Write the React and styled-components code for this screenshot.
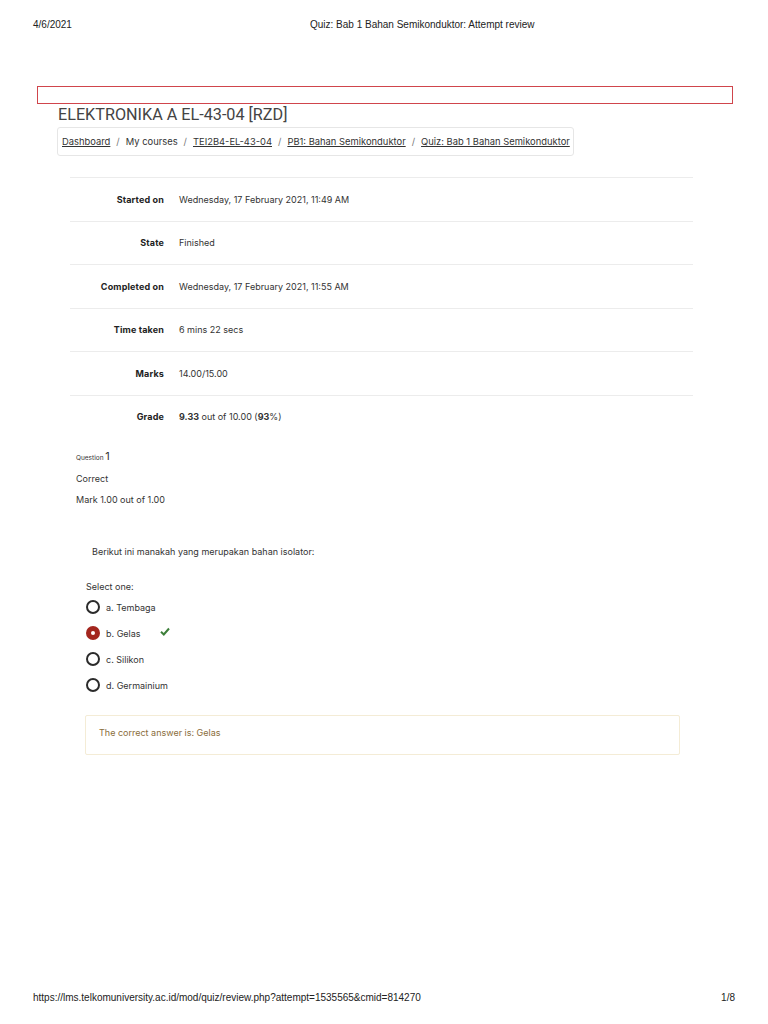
import React from "react";
import styled, { createGlobalStyle } from "styled-components";

const Global = createGlobalStyle`
  html, body { margin: 0; padding: 0; background: #fff; }
  body { font-family: Inter, "Noto Sans", sans-serif; color: #333; }
  * { box-sizing: border-box; }
`;

const Page = styled.div`
  width: 768px;
  min-height: 1024px;
  display: flex;
  flex-direction: column;
`;

const PrintBar = styled.div`
  display: flex;
  align-items: center;
  height: 12px;
  padding: 0 33px;
  font-family: "Liberation Sans", Arial, sans-serif;
  font-size: 10px;
  line-height: 12px;
  color: #222;
  margin-top: ${(p) => p.$top || 0}px;
  margin-bottom: ${(p) => p.$bottom || 0}px;
`;

const PrintCenter = styled.span`
  margin-left: ${(p) => p.$offset}px;
`;

const PrintRight = styled.span`
  margin-left: auto;
`;

const Content = styled.main`
  padding: 0 35px 0 37px;
  display: flex;
  flex-direction: column;
`;

const AlertBox = styled.div`
  margin-top: 55px;
  height: 18px;
  border: 1px solid #d0454c;
`;

const CourseTitle = styled.h1`
  margin: 0 0 0 21px;
  font-family: Roboto, Inter, sans-serif;
  font-size: 16.2px;
  line-height: 22px;
  font-weight: 400;
  color: #444;
`;

const Crumbs = styled.nav`
  margin: 1px 0 0 20px;
  align-self: flex-start;
  height: 29px;
  padding: 0 3px 0 4px;
  border: 1px solid #e6e6e6;
  border-radius: 3px;
  display: flex;
  align-items: center;
  font-size: 9.4px;
  color: #333;
`;

const Crumb = styled.span`
  text-decoration: ${(p) => (p.$link ? "underline" : "none")};
`;

const Sep = styled.span`
  margin: 0 6px;
  color: #777;
`;

const SummaryTable = styled.div`
  margin: 21px 0 0 33px;
  width: 623px;
  display: flex;
  flex-direction: column;
`;

const Row = styled.div`
  height: 43.5px;
  border-top: 1px solid #ececec;
  display: grid;
  grid-template-columns: 94px 1fr;
  column-gap: 15px;
  align-items: center;
  font-size: 9px;
`;

const Label = styled.div`
  text-align: right;
  font-weight: 700;
  color: #222;
  letter-spacing: 0.15px;
`;

const Value = styled.div`
  color: #333;
`;

const Strong = styled.b`
  font-weight: 700;
`;

const QInfo = styled.section`
  margin: 11px 0 0 39px;
  display: flex;
  flex-direction: column;
  gap: 6px;
  font-size: 9px;
  color: #333;
`;

const QNo = styled.div`
  font-size: 6.5px;
  line-height: 14px;
  & > span {
    font-size: 11px;
  }
`;

const QLine = styled.div`
  line-height: 15px;
`;

const QText = styled.p`
  margin: 38px 0 0 55px;
  font-size: 9px;
  line-height: 14px;
`;

const Answers = styled.div`
  margin: 21px 0 0 49px;
  display: flex;
  flex-direction: column;
  font-size: 9px;
`;

const Prompt = styled.div`
  line-height: 14px;
`;

const Option = styled.div`
  display: flex;
  align-items: center;
  height: 26px;
  gap: 6px;
`;

const Radio = styled.span`
  width: 14px;
  height: 14px;
  border-radius: 50%;
  border: ${(p) => (p.$checked ? "none" : "2px solid #2b2b2b")};
  background: ${(p) => (p.$checked ? "#a3261e" : "#fff")};
  display: flex;
  align-items: center;
  justify-content: center;
  &::after {
    content: "";
    display: ${(p) => (p.$checked ? "block" : "none")};
    width: 4px;
    height: 4px;
    border-radius: 50%;
    background: #fff;
  }
`;

const OptText = styled.span`
  color: #333;
`;

const Check = styled.svg`
  margin-left: 13px;
  margin-top: -3px;
`;

const Feedback = styled.div`
  margin: 17px 0 0 48px;
  width: 595px;
  height: 40px;
  border: 1px solid #f4ecd6;
  border-radius: 2px;
  padding: 0 13px 6px;
  display: flex;
  align-items: center;
  font-size: 9px;
  color: #8a6d3b;
`;

const Spacer = styled.div`
  flex: 1;
`;

const rows = [
  ["Started on", "Wednesday, 17 February 2021, 11:49 AM"],
  ["State", "Finished"],
  ["Completed on", "Wednesday, 17 February 2021, 11:55 AM"],
  ["Time taken", "6 mins 22 secs"],
  ["Marks", "14.00/15.00"],
];

const options = [
  { t: "a. Tembaga" },
  { t: "b. Gelas", checked: true },
  { t: "c. Silikon" },
  { t: "d. Germainium" },
];

export default function App() {
  return (
    <>
      <Global />
      <Page>
        <PrintBar $top={19}>
          <span>4/6/2021</span>
          <PrintCenter $offset={238}>Quiz: Bab 1 Bahan Semikonduktor: Attempt review</PrintCenter>
        </PrintBar>
        <Content>
          <AlertBox />
          <CourseTitle>ELEKTRONIKA A EL-43-04 [RZD]</CourseTitle>
          <Crumbs>
            <Crumb $link>Dashboard</Crumb>
            <Sep>/</Sep>
            <Crumb>My courses</Crumb>
            <Sep>/</Sep>
            <Crumb $link>TEI2B4-EL-43-04</Crumb>
            <Sep>/</Sep>
            <Crumb $link>PB1: Bahan Semikonduktor</Crumb>
            <Sep>/</Sep>
            <Crumb $link>Quiz: Bab 1 Bahan Semikonduktor</Crumb>
          </Crumbs>
          <SummaryTable>
            {rows.map(([l, v]) => (
              <Row key={l}>
                <Label>{l}</Label>
                <Value>{v}</Value>
              </Row>
            ))}
            <Row>
              <Label>Grade</Label>
              <Value>
                <Strong>9.33</Strong> out of 10.00 (<Strong>93</Strong>%)
              </Value>
            </Row>
          </SummaryTable>
          <QInfo>
            <QNo>
              Question <span>1</span>
            </QNo>
            <QLine>Correct</QLine>
            <QLine>Mark 1.00 out of 1.00</QLine>
          </QInfo>
          <QText>Berikut ini manakah yang merupakan bahan isolator:</QText>
          <Answers>
            <Prompt>Select one:</Prompt>
            {options.map((o) => (
              <Option key={o.t}>
                <Radio $checked={o.checked} />
                <OptText>{o.t}</OptText>
                {o.checked && (
                  <Check width="10" height="9" viewBox="0 0 10 9">
                    <path d="M1 4.8 L3.8 7.5 L9 1.5" fill="none" stroke="#3d7f3a" strokeWidth="2" />
                  </Check>
                )}
              </Option>
            ))}
          </Answers>
          <Feedback>The correct answer is: Gelas</Feedback>
        </Content>
        <Spacer />
        <PrintBar $bottom={20}>
          <span>https://lms.telkomuniversity.ac.id/mod/quiz/review.php?attempt=1535565&amp;cmid=814270</span>
          <PrintRight>1/8</PrintRight>
        </PrintBar>
      </Page>
    </>
  );
}
